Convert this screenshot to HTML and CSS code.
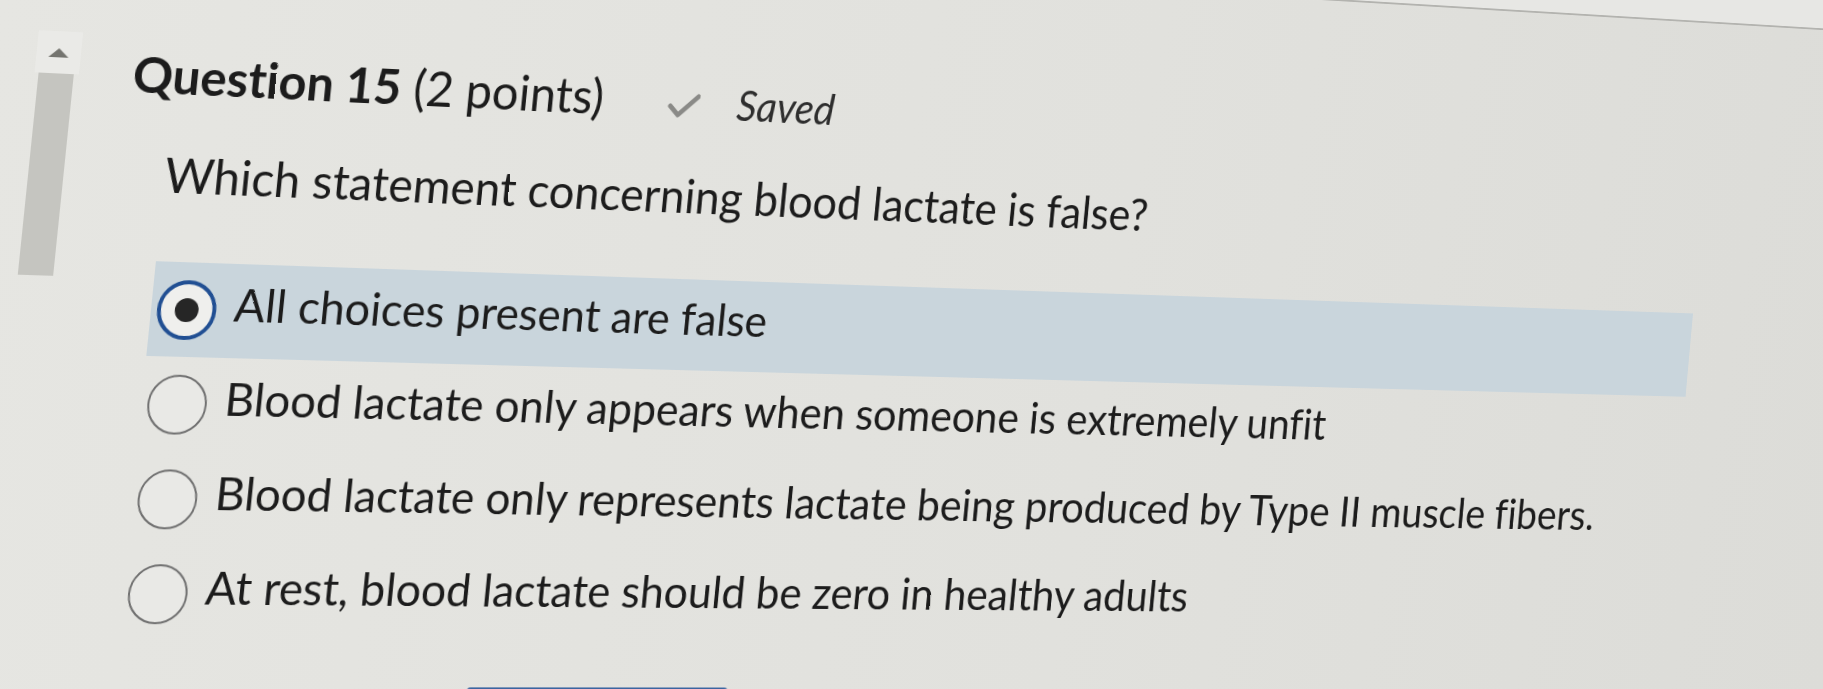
FILE: index.html
```html
<!DOCTYPE html>
<html lang="en">
<head>
    <meta charset="UTF-8">
    <title>Question 15</title>
    <link rel="stylesheet" href="styles.css">
</head>
<body>
    <div class="screen">
        <div class="toolbar"></div>
        <div class="pane">
            <!-- scroll bar of the question list -->
            <div class="scrollbar">
                <div class="scroll-btn"><span class="arrow-up"></span></div>
                <div class="scroll-thumb"></div>
            </div>
            <div class="question">
                <div class="q-header">
                    <h2 class="q-title"><strong>Question 15</strong> (2 points)</h2>
                    <span class="saved"><svg viewBox="0 0 35 26" width="35" height="26"><path d="M3 14 L12 23 L33 3" fill="none" stroke="#8a8a87" stroke-width="5" stroke-linecap="round" stroke-linejoin="round"/></svg><em>Saved</em></span>
                </div>
                <p class="q-text">Which statement concerning blood lactate is false?</p>
                <ul class="answers">
                    <li class="answer selected"><span class="radio"></span><span class="label">All choices present are false</span></li>
                    <li class="answer"><span class="radio"></span><span class="label">Blood lactate only appears when someone is extremely unfit</span></li>
                    <li class="answer"><span class="radio"></span><span class="label">Blood lactate only represents lactate being produced by Type II muscle fibers.</span></li>
                    <li class="answer"><span class="radio"></span><span class="label">At rest, blood lactate should be zero in healthy adults</span></li>
                </ul>
                <div class="actions"><button class="btn-next" type="button"></button></div>
            </div>
        </div>
    </div>
</body>
</html>
```

FILE: styles.css
```css
html, body {
    margin: 0;
    height: 100%;
}

body {
    overflow: hidden;
    background: linear-gradient(100deg, #e6e6e2 0%, #e1e1dd 60%, #dcdcd8 100%);
    font-family: Lato, "Open Sans", sans-serif;
    font-variant-ligatures: none;
    color: #1c1c1c;
}

/* quiz pane, seen slightly tilted */
.screen {
    width: 2300px;
    margin-top: -110px;
    transform-origin: 150px 410px;
    transform: perspective(1500px) rotateY(6.7deg) rotate(1.76deg) skewX(-4.1deg);
}

.toolbar {
    height: 38px;
    border-bottom: 2px solid #b3b3af;
    background: #e7e7e4;
}

.pane {
    display: flex;
    padding-top: 70px;
    height: 900px;
}

.scrollbar {
    flex: none;
    width: 44px;
    margin: 36px 0 0 12px;
}

.scroll-btn {
    height: 42px;
    background: #eaeae7;
    display: flex;
    align-items: center;
    justify-content: center;
}

.arrow-up {
    width: 0;
    height: 0;
    border-left: 10px solid transparent;
    border-right: 10px solid transparent;
    border-bottom: 9px solid #74746f;
}

.scroll-thumb {
    width: 35px;
    height: 201px;
    margin-left: 4px;
    background: #c5c5c0;
}

.question {
    margin: 43.6px 0 0 54px;
}

.q-header {
    display: flex;
    align-items: baseline;
}

.q-title {
    margin: 0;
    font-size: 50px;
    line-height: 1.2;
    font-weight: 400;
}

.q-title strong {
    font-weight: 700;
}

.saved {
    margin-left: 70px;
    color: #2e2e2e;
}

.saved em {
    margin-left: 41px;
    font-size: 43.7px;
}

.q-text {
    margin: 40.6px 0 0 42px;
    font-size: 48.4px;
    line-height: 1.2;
}

.answers {
    list-style: none;
    margin: 59.2px 0 0 42px;
    padding: 0;
    width: 1762px;
}

.answer {
    display: flex;
    align-items: center;
    height: 95px;
    padding-left: 6px;
}

.answer.selected {
    background: #c9d5dc;
}

.radio {
    flex: none;
    width: 60px;
    height: 60px;
    box-sizing: border-box;
    border-radius: 50%;
    border: 2px solid #707070;
    background: #e9e9e6;
}

.selected .radio {
    border: 4px solid #214f93;
    background: #efefed;
    display: flex;
    align-items: center;
    justify-content: center;
}

.selected .radio::after {
    content: "";
    width: 24px;
    height: 24px;
    border-radius: 50%;
    background: #262626;
}

.label {
    margin-left: 18px;
    font-size: 46.7px;
    line-height: 1.2;
    padding-bottom: 15px;
    white-space: nowrap;
}

.actions {
    margin: 45.5px 0 0 407px;
}

.btn-next {
    display: block;
    width: 282px;
    height: 56px;
    border: 0;
    border-radius: 4px;
    background: #3c65a0;
}
```
